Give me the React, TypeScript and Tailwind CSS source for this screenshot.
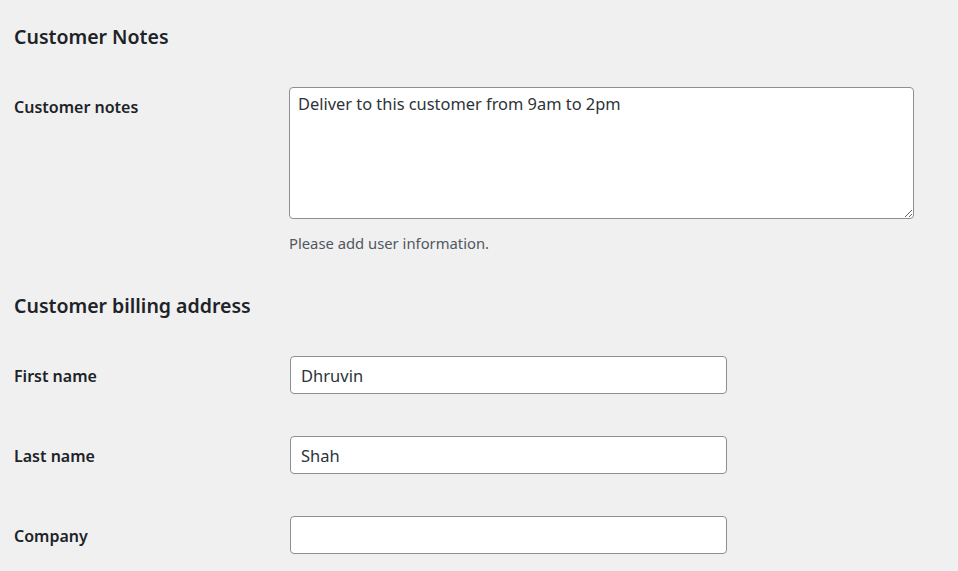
import { useState } from 'react';

const font = { fontFamily: '"Noto Sans", "Open Sans", Roboto, sans-serif' };

function TextRow({ label, value }: { label: string; value: string }) {
  const [val, setVal] = useState(value);
  return (
    <div className="grid grid-cols-[276px_1fr] items-center">
      <label className="pt-[2px] text-[16px] leading-[24px] font-semibold text-[#1d2327]">{label}</label>
      <input
        type="text"
        value={val}
        onChange={(e) => setVal(e.target.value)}
        className="w-[437px] h-[38px] px-[10px] bg-white border border-[#8c8f94] rounded-[4px] text-[16.5px] text-[#2c3338] outline-none"
      />
    </div>
  );
}

export default function App() {
  const [notes, setNotes] = useState('Deliver to this customer from 9am to 2pm');

  return (
    <div className="min-h-[571px] w-full bg-[#f0f0f1] pl-[14px] overflow-hidden" style={font}>
      <h2 className="pt-[23px] text-[19.5px] leading-[28px] font-semibold text-[#1d2327]">Customer Notes</h2>

      <div className="mt-[36px] grid grid-cols-[275px_1fr] items-start">
        <label className="pt-[8px] text-[16px] leading-[24px] font-semibold text-[#1d2327]">Customer notes</label>
        <div>
          <textarea
            value={notes}
            onChange={(e) => setNotes(e.target.value)}
            className="block w-[625px] h-[132px] px-[8px] pt-[4px] pb-[5px] bg-white border border-[#8c8f94] rounded-[4px] text-[16.4px] leading-[24px] text-[#2c3338] outline-none"
          />
          <p className="mt-[14px] text-[14.8px] leading-[20px] text-[#50575e]">Please add user information.</p>
        </div>
      </div>

      <h2 className="mt-[39px] text-[19.5px] leading-[28px] font-semibold text-[#1d2327]">Customer billing address</h2>

      <div className="mt-[36px] flex flex-col gap-[42px]">
        <TextRow label="First name" value="Dhruvin" />
        <TextRow label="Last name" value="Shah" />
        <TextRow label="Company" value="" />
      </div>
    </div>
  );
}
